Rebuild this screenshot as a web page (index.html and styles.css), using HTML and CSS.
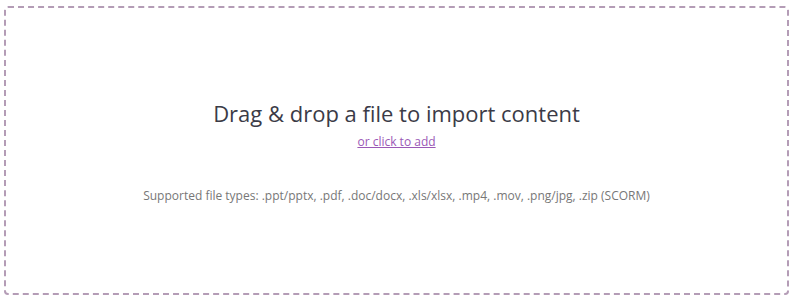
FILE: index.html
```html
<!DOCTYPE html>
<html>
<head>
<meta charset="utf-8">
<link rel="stylesheet" href="styles.css">
</head>
<body>
<div class="dropzone">
  <div class="title">Drag &amp; drop a file to import content</div>
  <a class="add-link" href="#">or click to add</a>
  <div class="types">Supported file types: .ppt/pptx, .pdf, .doc/docx, .xls/xlsx, .mp4, .mov, .png/jpg, .zip (SCORM)</div>
</div>
</body>
</html>
```

FILE: styles.css
```css
html, body {
  margin: 0;
  padding: 0;
  background: #ffffff;
}
body {
  padding: 6px 7px 6px 4px;
  font-family: "Open Sans", "Liberation Sans", sans-serif;
}
.dropzone {
  box-sizing: border-box;
  height: 289px;
  border: 2px dashed #b49cb6;
  border-radius: 4px;
  display: flex;
  flex-direction: column;
  align-items: center;
  padding-top: 90px;
}
.title {
  font-size: 22px;
  color: #3b3b47;
  line-height: 30px;
}
.add-link {
  margin-top: 6px;
  font-size: 12px;
  color: #9b59b6;
  line-height: 16px;
}
.types {
  margin-top: 38px;
  font-size: 12px;
  color: #777777;
  line-height: 16px;
}
```
